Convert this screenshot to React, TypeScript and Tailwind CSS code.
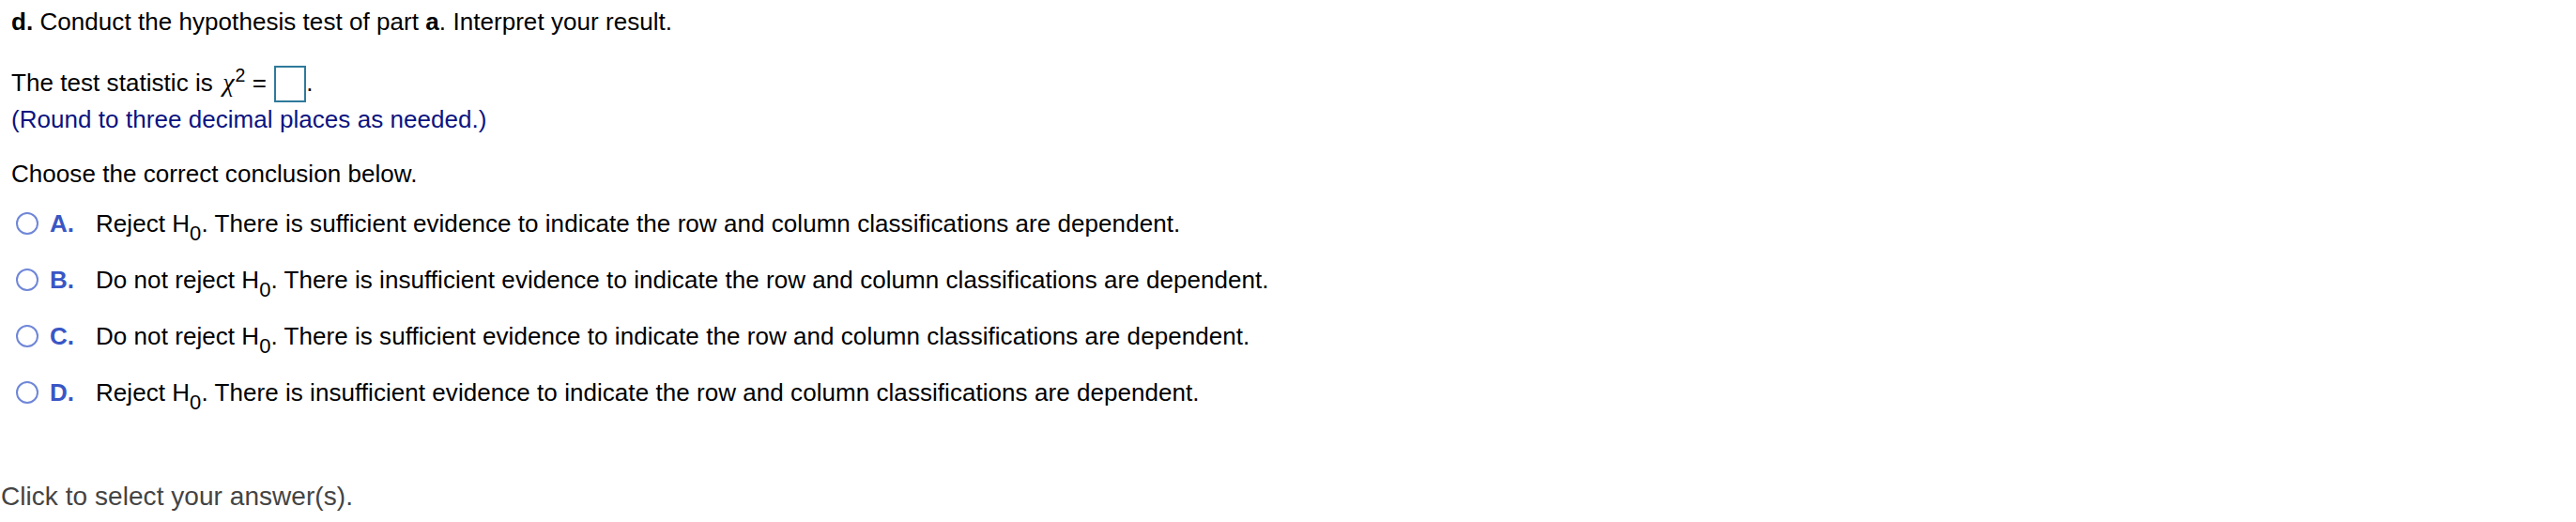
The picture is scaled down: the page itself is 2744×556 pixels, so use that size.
import React from "react";

const options = [
  { letter: "A.", pre: "Reject H", post: ". There is sufficient evidence to indicate the row and column classifications are dependent." },
  { letter: "B.", pre: "Do not reject H", post: ". There is insufficient evidence to indicate the row and column classifications are dependent." },
  { letter: "C.", pre: "Do not reject H", post: ". There is sufficient evidence to indicate the row and column classifications are dependent." },
  { letter: "D.", pre: "Reject H", post: ". There is insufficient evidence to indicate the row and column classifications are dependent." },
];

export default function App() {
  return (
    <div className="w-[2744px] h-[556px] bg-white text-black font-['Liberation_Sans',Arial,sans-serif] text-[26px] tracking-[0.05px] overflow-hidden">
      <div className="pt-[8px]">
        <p className="pl-[12px] leading-[30px] whitespace-nowrap">
          <b>d.</b> Conduct the hypothesis test of part <b>a</b>. Interpret your result.
        </p>
        <p className="pl-[12px] mt-[32px] leading-[30px] whitespace-nowrap">
          The test statistic is <i className="ml-[3px] text-[28px] font-['Liberation_Serif',serif]">χ</i>
          <sup className="ml-[1px]">2</sup> ={" "}
          <span className="inline-block w-[34px] h-[39px] border-2 border-[#2f7a9b] align-[-12px] ml-[1px]"></span>.
        </p>
        <p className="pl-[12px] mt-[3px] leading-[30px] text-[#0c1380] whitespace-nowrap">
          (Round to three decimal places as needed.)
        </p>
        <p className="pl-[12px] mt-[28px] leading-[30px] whitespace-nowrap">
          Choose the correct conclusion below.
        </p>
        <div className="mt-[23px] flex flex-col gap-[30px]">
          {options.map((o) => (
            <div key={o.letter} className="flex items-center h-[30px] pl-[17px] whitespace-nowrap">
              <span className="shrink-0 w-[24px] h-[24px] rounded-full border-2 border-[#6f87d8]"></span>
              <span className="ml-[12px] w-[49px] shrink-0 font-bold text-[#3a56c5] leading-[30px]">{o.letter}</span>
              <span className="leading-[30px]">
                {o.pre}
                <sub className="text-[22px] bottom-[-9px]">0</sub>
                {o.post}
              </span>
            </div>
          ))}
        </div>
        <p className="pl-[1px] mt-[80px] text-[28px] leading-[32px] text-[#444444] whitespace-nowrap">
          Click to select your answer(s).
        </p>
      </div>
    </div>
  );
}
